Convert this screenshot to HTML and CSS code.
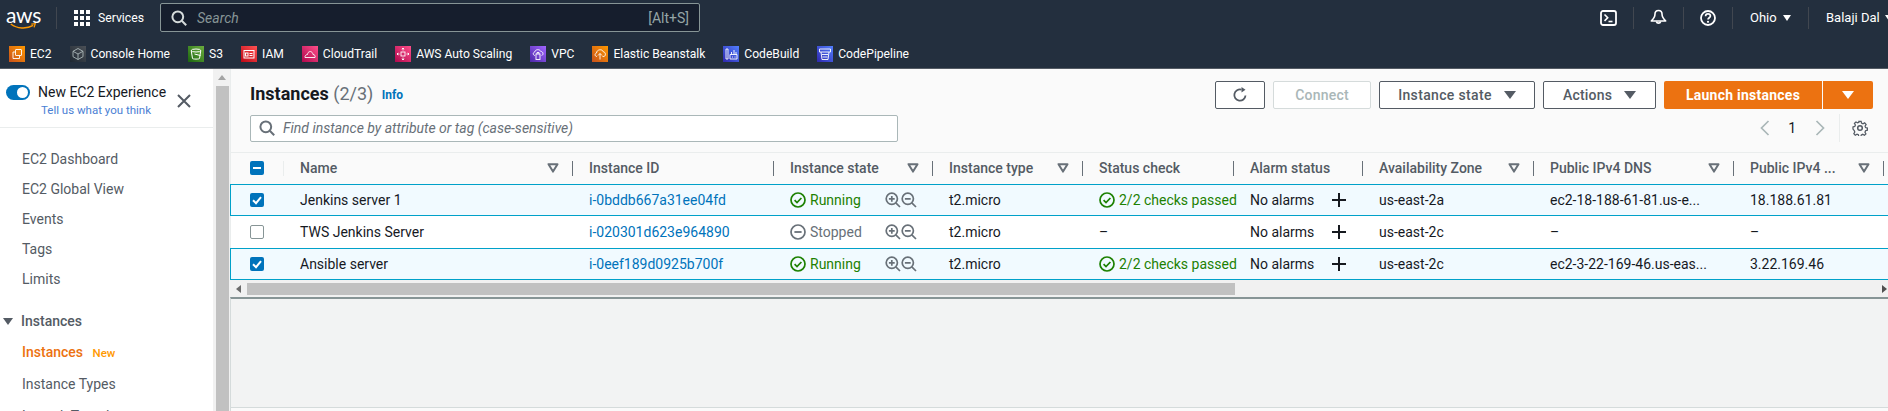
FILE: index.html
```html
<!DOCTYPE html>
<html lang="en">
<head>
<meta charset="utf-8">
<title>Instances | EC2</title>
<link rel="stylesheet" href="styles.css">
</head>
<body>
<svg class="defs" width="0" height="0" aria-hidden="true">
  <symbol id="i-filter" viewBox="0 0 12 10"><path d="M1.5 1.2h9L6 8.6z" fill="none" stroke="#687078" stroke-width="2" stroke-linejoin="round"/></symbol>
  <symbol id="i-ok" viewBox="0 0 16 16"><circle cx="8" cy="8" r="7" fill="none" stroke="#1d8102" stroke-width="1.7"/><path d="M4.6 8.2l2.4 2.4 4.4-4.6" fill="none" stroke="#1d8102" stroke-width="1.7"/></symbol>
  <symbol id="i-stop" viewBox="0 0 16 16"><circle cx="8" cy="8" r="7" fill="none" stroke="#687078" stroke-width="1.7"/><path d="M4.4 8h7.2" fill="none" stroke="#687078" stroke-width="1.8"/></symbol>
  <symbol id="i-zin" viewBox="0 0 16 16"><circle cx="6.8" cy="6.8" r="5.6" fill="none" stroke="#687078" stroke-width="1.7"/><path d="M10.8 10.8l4.2 4.2M3.9 6.8h5.8M6.8 3.9v5.8" fill="none" stroke="#687078" stroke-width="1.7"/></symbol>
  <symbol id="i-zout" viewBox="0 0 16 16"><circle cx="6.8" cy="6.8" r="5.6" fill="none" stroke="#687078" stroke-width="1.7"/><path d="M10.8 10.8l4.2 4.2M3.9 6.8h5.8" fill="none" stroke="#687078" stroke-width="1.7"/></symbol>
  <symbol id="i-plus" viewBox="0 0 14 14"><path d="M7 0v14M0 7h14" fill="none" stroke="#16191f" stroke-width="2"/></symbol>
  <symbol id="i-check" viewBox="0 0 14 14"><rect width="14" height="14" rx="2" fill="#0073bb"/><path d="M3 7.2l3 3 5-6" fill="none" stroke="#fff" stroke-width="2"/></symbol>
  <symbol id="i-search" viewBox="0 0 16 16"><circle cx="6.8" cy="6.8" r="5.4" fill="none" stroke="currentColor" stroke-width="2"/><path d="M10.8 10.8l4.4 4.4" fill="none" stroke="currentColor" stroke-width="2"/></symbol>
</svg>

<header class="topnav">
  <div class="logo">
    <span class="logo-text">aws</span>
    <svg class="logo-smile" width="31" height="8" viewBox="0 0 31 8"><path d="M1 1.2C8 6.6 19 7.2 26.6 2.8" fill="none" stroke="#f90" stroke-width="1.6"/><path d="M24.4 1.2l4.6-.4-1.4 4.2" fill="none" stroke="#f90" stroke-width="1.4"/></svg>
  </div>
  <span class="nav-sep sep-logo"></span>
  <svg class="grid-ic" width="16" height="16" viewBox="0 0 16 16" fill="#fff"><rect width="4" height="4"/><rect x="6" width="4" height="4"/><rect x="12" width="4" height="4"/><rect y="6" width="4" height="4"/><rect x="6" y="6" width="4" height="4"/><rect x="12" y="6" width="4" height="4"/><rect y="12" width="4" height="4"/><rect x="6" y="12" width="4" height="4"/><rect x="12" y="12" width="4" height="4"/></svg>
  <span class="services">Services</span>
  <div class="global-search">
    <svg class="gs-ic" width="16" height="16"><use href="#i-search"/></svg>
    <span class="gs-text">Search</span>
    <span class="gs-key">[Alt+S]</span>
  </div>
  <div class="nav-right">
    <svg class="nav-ic" width="17" height="16" viewBox="0 0 17 16"><rect x="1" y="1" width="15" height="14" rx="2" fill="none" stroke="#fff" stroke-width="1.8"/><path d="M4.5 4.5l3.2 3.2-3.2 3.2" fill="none" stroke="#fff" stroke-width="1.6"/><path d="M8.5 11.5h4" stroke="#fff" stroke-width="1.6"/></svg>
    <span class="nav-sep"></span>
    <svg class="nav-ic" width="17" height="17" viewBox="0 0 17 17"><path d="M8.500 1.500c-2.500 0-3.600 2-3.600 4.200 0 2.600-1.800 4.400-3.600 6.300h14.400c-1.800-1.900-3.600-3.700-3.600-6.300 0-2.200-1.100-4.200-3.600-4.200z" fill="none" stroke="#fff" stroke-width="1.600" stroke-linejoin="round"/><path d="M6.300 12.500a2.300 2.300 0 0 0 4.400 0" fill="none" stroke="#fff" stroke-width="1.600"/></svg>
    <span class="nav-sep"></span>
    <svg class="nav-ic" width="16" height="16" viewBox="0 0 16 16"><circle cx="8" cy="8" r="7" fill="none" stroke="#fff" stroke-width="1.8"/><path d="M5.600 6.200c0-1.500 1.100-2.300 2.400-2.300s2.400.8 2.400 2.100c0 1.700-2.400 1.800-2.400 3.600" fill="none" stroke="#fff" stroke-width="1.700"/><circle cx="8" cy="11.800" r="1.100" fill="#fff"/></svg>
    <span class="nav-sep"></span>
    <span class="nav-label ohio">Ohio</span><span class="caret-w caret-ohio"></span>
    <span class="nav-sep"></span>
    <span class="nav-label user">Balaji Dal</span><span class="caret-w caret-user"></span>
  </div>
</header>

<nav class="favbar">
  <a class="fav"><span class="svc orange"><svg width="16" height="16" viewBox="0 0 16 16" fill="none" stroke="#fff" stroke-width=".9"><rect x="6.500" y="3.500" width="6" height="6" rx=".5"/><path d="M6.500 6H4v6.500h6.500V9.500"/></svg></span>EC2</a>
  <a class="fav"><span class="svc dark"><svg width="16" height="16" viewBox="0 0 16 16" fill="none" stroke="#aab7b8" stroke-width=".9"><path d="M8 2.500l5 2.800v5.400l-5 2.800-5-2.800V5.300zM3 5.300l5 2.700 5-2.700M8 8v5.500"/></svg></span>Console Home</a>
  <a class="fav"><span class="svc green"><svg width="16" height="16" viewBox="0 0 16 16" fill="none" stroke="#fff" stroke-width="1"><ellipse cx="8" cy="4.500" rx="4.800" ry="1.500"/><path d="M3.200 4.500l1.300 8c.3.8 6.700.8 7 0l1.300-8M6.500 8l6 1.500"/></svg></span>S3</a>
  <a class="fav"><span class="svc red"><svg width="16" height="16" viewBox="0 0 16 16" fill="none" stroke="#fff" stroke-width="1"><rect x="3" y="4.500" width="10" height="7.500"/><rect x="4.500" y="7" width="2.500" height="3"/><path d="M8.500 7.500h3M8.500 9.500h3"/></svg></span>IAM</a>
  <a class="fav"><span class="svc pink"><svg width="16" height="16" viewBox="0 0 16 16" fill="none" stroke="#fff" stroke-width=".9"><path d="M3 11.500h10c.6-1.600-.4-3-2-3C10.500 6 8.700 4.800 6.800 6 5.800 6.700 5.600 7.800 5.500 8.500 4 8.500 2.700 10 3 11.500z"/></svg></span>CloudTrail</a>
  <a class="fav"><span class="svc pink"><svg width="16" height="16" viewBox="0 0 16 16" fill="none" stroke="#fff" stroke-width=".9"><rect x="6" y="6" width="4" height="4"/><path d="M8 2v2.500M8 11.500V14M2 8h2.500M11.500 8H14M6.800 3.200L8 2l1.200 1.200M6.800 12.800L8 14l1.200-1.200M3.200 6.800L2 8l1.200 1.200M12.800 6.800L14 8l-1.200 1.200"/></svg></span>AWS Auto Scaling</a>
  <a class="fav"><span class="svc purple"><svg width="16" height="16" viewBox="0 0 16 16" fill="none" stroke="#fff" stroke-width=".9"><path d="M5 9.500C3 9.500 2.500 6.500 4.800 6 5 3.500 9.500 2.500 10.800 5.500c2.400-.2 3 3.500.8 4"/><rect x="6" y="8" width="4" height="5.500"/><path d="M7 8V6.500h2V8"/></svg></span>VPC</a>
  <a class="fav"><span class="svc orange"><svg width="16" height="16" viewBox="0 0 16 16" fill="none" stroke="#fff" stroke-width=".9"><path d="M5 10.500C2.800 10.500 2.300 7.600 4.500 7c0-3.500 5.800-4.500 6.800-1.200 2.300 0 3 4 .6 4.700H10.500M8 13.500V7.500M6 9.500l2-2 2 2"/></svg></span>Elastic Beanstalk</a>
  <a class="fav"><span class="svc blue"><svg width="16" height="16" viewBox="0 0 16 16" fill="none" stroke="#fff" stroke-width=".9"><path d="M3 3v10M5 3v10M3 3h2M3 13h2M7 13h7V8.500H7zM8.500 8.500V6M11 8.500V4M13 8.500V6M9 11h1M11.500 11h1"/></svg></span>CodeBuild</a>
  <a class="fav"><span class="svc blue"><svg width="16" height="16" viewBox="0 0 16 16" fill="none" stroke="#fff" stroke-width=".9"><path d="M2.500 3h11v3h-11zM4 6l1 7.500h6L12 6M5 8.500h6M5.500 11h5"/></svg></span>CodePipeline</a>
</nav>

<div class="shell">
  <aside class="side">
    <div class="side-head">
      <span class="toggle"><span class="knob"></span></span>
      <div class="side-head-text">
        <div class="exp-title">New EC2 Experience</div>
        <div class="exp-link">Tell us what you think</div>
      </div>
      <svg class="side-close" width="14" height="14" viewBox="0 0 14 14"><path d="M1 1l12 12M13 1L1 13" fill="none" stroke="#545b64" stroke-width="2"/></svg>
    </div>
    <ul class="side-list">
      <li>EC2 Dashboard</li>
      <li>EC2 Global View</li>
      <li>Events</li>
      <li>Tags</li>
      <li>Limits</li>
    </ul>
    <div class="side-group"><span class="group-caret"></span>Instances</div>
    <ul class="side-list sub">
      <li class="active">Instances <span class="new">New</span></li>
      <li>Instance Types</li>
      <li>Launch Templates</li>
    </ul>
  </aside>
  <div class="vscroll"><span class="vs-up"></span><span class="vs-thumb"></span></div>

  <main class="main">
    <section class="tools">
      <div class="tools-top">
        <h1 class="title">Instances <span class="count">(2/3)</span> <a class="info">Info</a></h1>
        <div class="actions">
          <button class="btn btn-refresh"><svg width="16" height="16" viewBox="0 0 16 16" fill="none" stroke="#545b64" stroke-width="1.800"><path d="M13.500 8.500A5.600 5.600 0 1 1 9.500 2.700"/><path d="M9.500 0v5.500l4-2.700z" fill="#545b64" stroke="none"/></svg></button>
          <button class="btn btn-connect">Connect</button>
          <button class="btn btn-state">Instance state<span class="caret-d"></span></button>
          <button class="btn btn-actions">Actions<span class="caret-d"></span></button>
          <div class="launch">
            <button class="btn-launch">Launch instances</button>
            <button class="btn-launch-c"><span class="caret-l"></span></button>
          </div>
        </div>
      </div>
      <div class="tools-bottom">
        <div class="find">
          <svg class="find-ic" width="16" height="16"><use href="#i-search"/></svg>
          <span>Find instance by attribute or tag (case-sensitive)</span>
        </div>
        <div class="pager">
          <svg width="10" height="16" viewBox="0 0 10 16"><path d="M8.500 1L1.500 8l7 7" fill="none" stroke="#aab7b8" stroke-width="1.700"/></svg>
          <span class="page-n">1</span>
          <svg width="10" height="16" viewBox="0 0 10 16"><path d="M1.500 1l7 7-7 7" fill="none" stroke="#aab7b8" stroke-width="1.700"/></svg>
          <span class="pager-sep"></span>
          <svg class="gear" width="16" height="16" viewBox="0 0 16 16" fill="none" stroke="#545b64"><circle cx="8" cy="8" r="2.300" stroke-width="1.500"/><path d="M6.800 1h2.400l.4 2 1.500.7 1.800-1 1.500 1.700-1.100 1.700.5 1.500 1.900.5v2.200l-1.900.6-.6 1.500 1 1.700-1.600 1.500-1.700-1-1.500.6-.5 1.800H6.800l-.5-1.900-1.400-.6-1.800 1-1.500-1.600 1-1.700-.6-1.500L.7 9.200V6.900l1.900-.5.6-1.500-1-1.700 1.600-1.500 1.700 1 1.400-.6z" stroke-width="1.300" transform="translate(.3 .3) scale(.96)"/></svg>
        </div>
      </div>
    </section>

    <div class="tr thead">
      <div class="hc hc-check"><span class="cb-mixed"><span></span></span></div>
      <div class="hc hc-first">Name<svg class="flt" width="12" height="10"><use href="#i-filter"/></svg></div>
      <div class="hc">Instance ID</div>
      <div class="hc">Instance state<svg class="flt" width="12" height="10"><use href="#i-filter"/></svg></div>
      <div class="hc">Instance type<svg class="flt" width="12" height="10"><use href="#i-filter"/></svg></div>
      <div class="hc">Status check</div>
      <div class="hc">Alarm status</div>
      <div class="hc">Availability Zone<svg class="flt" width="12" height="10"><use href="#i-filter"/></svg></div>
      <div class="hc">Public IPv4 DNS<svg class="flt" width="12" height="10"><use href="#i-filter"/></svg></div>
      <div class="hc">Public IPv4 ...<svg class="flt" width="12" height="10"><use href="#i-filter"/></svg></div>
      <div class="hc hc-end"></div>
    </div>

    <div class="tr row sel">
      <div class="td td-check"><svg width="14" height="14"><use href="#i-check"/></svg></div>
      <div class="td">Jenkins server 1</div>
      <div class="td"><a class="link">i-0bddb667a31ee04fd</a></div>
      <div class="td run"><svg class="st" width="16" height="16"><use href="#i-ok"/></svg>Running<span class="zooms"><svg width="16" height="16"><use href="#i-zin"/></svg><svg width="16" height="16"><use href="#i-zout"/></svg></span></div>
      <div class="td">t2.micro</div>
      <div class="td run"><svg class="st" width="16" height="16"><use href="#i-ok"/></svg>2/2 checks passed</div>
      <div class="td">No alarms<svg class="plus" width="14" height="14"><use href="#i-plus"/></svg></div>
      <div class="td">us-east-2a</div>
      <div class="td">ec2-18-188-61-81.us-e...</div>
      <div class="td">18.188.61.81</div>
      <div class="td"></div>
    </div>
    <div class="tr row">
      <div class="td td-check"><span class="cb-empty"></span></div>
      <div class="td">TWS Jenkins Server</div>
      <div class="td"><a class="link">i-020301d623e964890</a></div>
      <div class="td stopped"><svg class="st" width="16" height="16"><use href="#i-stop"/></svg>Stopped<span class="zooms"><svg width="16" height="16"><use href="#i-zin"/></svg><svg width="16" height="16"><use href="#i-zout"/></svg></span></div>
      <div class="td">t2.micro</div>
      <div class="td">–</div>
      <div class="td">No alarms<svg class="plus" width="14" height="14"><use href="#i-plus"/></svg></div>
      <div class="td">us-east-2c</div>
      <div class="td">–</div>
      <div class="td">–</div>
      <div class="td"></div>
    </div>
    <div class="tr row sel">
      <div class="td td-check"><svg width="14" height="14"><use href="#i-check"/></svg></div>
      <div class="td">Ansible server</div>
      <div class="td"><a class="link">i-0eef189d0925b700f</a></div>
      <div class="td run"><svg class="st" width="16" height="16"><use href="#i-ok"/></svg>Running<span class="zooms"><svg width="16" height="16"><use href="#i-zin"/></svg><svg width="16" height="16"><use href="#i-zout"/></svg></span></div>
      <div class="td">t2.micro</div>
      <div class="td run"><svg class="st" width="16" height="16"><use href="#i-ok"/></svg>2/2 checks passed</div>
      <div class="td">No alarms<svg class="plus" width="14" height="14"><use href="#i-plus"/></svg></div>
      <div class="td">us-east-2c</div>
      <div class="td">ec2-3-22-169-46.us-eas...</div>
      <div class="td">3.22.169.46</div>
      <div class="td"></div>
    </div>

    <div class="hscroll">
      <span class="hs-btn"><span class="hs-left"></span></span>
      <span class="hs-thumb"></span>
      <span class="hs-fill"></span>
      <span class="hs-btn hs-btn-r"><span class="hs-right"></span></span>
    </div>
    <div class="split"></div>
    <div class="foot"></div>
  </main>
</div>
</body>
</html>
```
FILE: styles.css
```css
* { box-sizing: border-box; }
html, body { margin: 0; height: 411px; overflow: hidden; }
body { font-family: Roboto, "Noto Sans", "Liberation Sans", sans-serif; font-size: 14px; color: #16191f; background: #fff; }
.defs { position: absolute; }
ul { list-style: none; margin: 0; padding: 0; }
button { font-family: inherit; }

/* top nav */
.topnav { height: 40px; background: #232f3e; color: #fff; display: flex; align-items: center; padding: 0 0 5px 8px; overflow: hidden; }
.logo { width: 31px; height: 24px; flex: none; display: flex; flex-direction: column; align-items: center; }
.logo-text { font-family: Lato, Roboto, sans-serif; font-size: 21px; line-height: 15px; letter-spacing: -.3px; margin-top: 1px; }
.logo-smile { margin-top: 1px; }
.nav-sep { width: 1px; height: 22px; background: #414750; flex: none; }
.sep-logo { margin: 0 17px; }
.grid-ic { flex: none; }
.services { font-size: 12.200px; margin-left: 8px; width: 62px; flex: none; }
.global-search { width: 540px; height: 29px; flex: none; border: 1px solid #879596; border-radius: 2px; background: #161e2d; display: flex; align-items: center; padding: 0 10px; }
.gs-ic { color: #d5dbdb; }
.gs-text { font-style: italic; font-size: 14px; color: #879596; margin-left: 10px; }
.gs-key { margin-left: auto; color: #95a5a6; font-size: 14px; }
.nav-right { margin-left: auto; margin-right: -5px; display: flex; align-items: center; flex: none; }
.nav-ic { flex: none; }
.nav-right .nav-sep { margin: 0 16px; }
.nav-label { font-size: 13px; white-space: nowrap; }
.ohio { width: 27px; margin-left: 1px; }
.user { width: 51px; margin-left: 1px; }
.caret-w { width: 0; height: 0; flex: none; border: 4.500px solid transparent; border-top: 6px solid #fff; border-bottom: 0; margin-left: 6px; }
.caret-ohio { margin-left: 5.500px; margin-right: 1.500px; }
.caret-user { margin-left: 8px; }

/* favourites */
.favbar { height: 29px; background: #232f3e; border-bottom: 1px solid #545b64; display: flex; align-items: center; padding-left: 9px; gap: 18px; }
.fav { color: #fff; font-size: 12.100px; display: flex; align-items: center; gap: 5px; white-space: nowrap; }
.svc { width: 16px; height: 16px; display: block; flex: none; }
.svc svg { display: block; }
.orange { background: linear-gradient(45deg, #c8511b, #f90); }
.dark { background: linear-gradient(45deg, #1e2731, #4c5157); }
.green { background: linear-gradient(45deg, #1b660f, #6cae3e); }
.red { background: linear-gradient(45deg, #bd0816, #ff5252); }
.pink { background: linear-gradient(45deg, #b0084d, #ff4f8b); }
.purple { background: linear-gradient(45deg, #4d27a8, #a166ff); }
.blue { background: linear-gradient(45deg, #2e27ad, #527fff); }

/* shell */
.shell { display: flex; height: 342px; }

/* sidebar */
.side { width: 213px; flex: none; background: #fff; overflow: hidden; color: #545b64; }
.side-head { height: 59px; border-bottom: 1px solid #eaeded; display: flex; align-items: flex-start; padding: 14px 0 0 6px; }
.toggle { width: 24px; height: 15px; border-radius: 8px; background: #0073bb; display: flex; align-items: center; justify-content: flex-end; padding-right: 2px; margin-top: 2px; flex: none; }
.knob { width: 11px; height: 11px; border-radius: 50%; background: #fff; }
.side-head-text { margin-left: 8px; width: 133px; flex: none; }
.exp-title { font-size: 14px; line-height: 18px; color: #16191f; white-space: nowrap; }
.exp-link { font-size: 11.500px; line-height: 16px; color: #4a80d4; padding-left: 3px; margin-top: 1px; white-space: nowrap; }
.side-close { margin: 11px 0 0 6px; flex: none; }
.side-list { padding-top: 16px; }
.side-list li { height: 30px; line-height: 30px; padding-left: 22px; white-space: nowrap; }
.side-group { margin-top: 12px; height: 30px; display: flex; align-items: center; font-weight: 500; padding-left: 3px; color: #545b64; }
.group-caret { width: 0; height: 0; border: 5px solid transparent; border-top: 7px solid #545b64; border-bottom: 0; margin-right: 8px; }
.side-list.sub { padding-top: 0; }
.side-list.sub li { height: 32px; line-height: 32px; }
.side-list .active { color: #ec7211; font-weight: 500; }
.new { font-size: 11.500px; margin-left: 6px; color: #ff9900; font-weight: 500; }

/* vertical scrollbar */
.vscroll { width: 17px; flex: none; background: #f1f1f1; padding: 6px 1px 0 2px; display: flex; flex-direction: column; align-items: center; }
.vs-up { width: 0; height: 0; border: 4px solid transparent; border-bottom: 5px solid #a3a3a3; border-top: 0; margin-bottom: 6px; }
.vs-thumb { flex: 1; width: 13px; background: #c1c1c1; }

/* main */
.main { flex: 1; min-width: 0; display: flex; flex-direction: column; background: #fafafa; }
.tools { height: 83px; border-left: 1px solid #eaeded; padding: 11px 15px 0 19px; }
.tools-top { height: 28px; display: flex; justify-content: space-between; align-items: center; }
.title { margin: -2px 0 0; font-size: 18px; font-weight: 700; color: #16191f; }
.count { font-weight: 400; color: #687078; }
.info { font-size: 12px; font-weight: 700; color: #0073bb; margin-left: 4px; vertical-align: 1px; }
.actions { display: flex; gap: 8px; align-items: stretch; height: 28px; margin-top: 2px; }
.btn { height: 28px; border: 1px solid #545b64; border-radius: 2px; background: #fff; color: #545b64; font-size: 14px; font-weight: 500; letter-spacing: .2px; display: flex; align-items: center; justify-content: center; padding: 0; }
.btn-refresh { width: 50px; }
.btn-connect { width: 98px; border-color: #d5dbdb; color: #aab7b8; }
.btn-state { width: 156px; letter-spacing: .35px; }
.btn-actions { width: 113px; }
.caret-d { width: 0; height: 0; border: 6px solid transparent; border-top: 8px solid #545b64; border-bottom: 0; margin-left: 12px; }
.launch { display: flex; gap: 1px; }
.btn-launch, .btn-launch-c { height: 28px; border: 0; background: #ec7211; color: #fff; font-size: 14px; font-weight: 700; padding: 0; }
.btn-launch { width: 158px; border-radius: 2px 0 0 2px; letter-spacing: .25px; }
.btn-launch-c { width: 50px; border-radius: 0 2px 2px 0; display: flex; align-items: center; justify-content: center; }
.caret-l { width: 0; height: 0; border: 6px solid transparent; border-top: 8px solid #fff; border-bottom: 0; }
.tools-bottom { margin-top: 6px; height: 28px; display: flex; justify-content: space-between; align-items: center; }
.find { width: 648px; height: 27px; border: 1px solid #aab7b8; border-radius: 2px; background: #fff; display: flex; align-items: center; padding-left: 8px; font-style: italic; color: #687078; font-size: 14px; }
.find-ic { color: #687078; margin-right: 8px; }
.pager { display: flex; align-items: center; height: 28px; margin-right: 5px; }
.page-n { width: 45.500px; text-align: center; font-size: 14px; color: #16191f; }
.pager-sep { width: 1px; height: 28px; background: #eaeded; margin: 0 12px 0 14px; }
.gear { display: block; }

/* table */
.tr { display: grid; grid-template-columns: 52px 289px 201px 159px 150px 151px 129px 171px 200px 150px 1fr; }
.thead { height: 32px; border-top: 1px solid #eaeded; border-left: 1px solid #eaeded; background: #fafafa; padding-bottom: 1px; }
.hc { display: flex; align-items: center; font-weight: 500; color: #545b64; white-space: nowrap; min-width: 0; }
.hc::before { content: ""; width: 1px; height: 15px; background: #687078; margin-right: 16px; flex: none; }
.hc-check::before { display: none; }
.hc-first::before { background: #eaeded; }
.hc-check { padding-left: 19px; }
.flt { margin-left: auto; margin-right: 13px; flex: none; }
.cb-mixed { width: 14px; height: 14px; border-radius: 2px; background: #0073bb; display: flex; align-items: center; justify-content: center; }
.cb-mixed span { width: 8px; height: 2px; background: #fff; }
.row { height: 32px; background: #fff; border-left: 1px solid #eaeded; }
.row.sel { background: #f1faff; border: 1px solid #00a1c9; border-width: 1px 0 1px 1px; }
.td { display: flex; align-items: center; padding-left: 17px; white-space: nowrap; min-width: 0; }
.td-check { padding-left: 19px; }
.td svg { flex: none; }
.cb-empty { width: 14px; height: 14px; border: 1px solid #879596; border-radius: 2px; background: #fff; }
.link { color: #0073bb; }
.run { color: #1d8102; }
.stopped { color: #687078; }
.st { margin-right: 4px; }
.zooms { display: flex; margin-left: auto; margin-right: 15px; }
.plus { margin-left: auto; margin-right: 16px; }

/* horizontal scrollbar */
.hscroll { height: 17px; background: #f1f1f1; display: flex; align-items: flex-end; padding-bottom: 2px; }
.hs-btn { width: 17px; height: 12px; display: flex; align-items: center; justify-content: center; flex: none; }
.hs-left { width: 0; height: 0; border: 4px solid transparent; border-right: 5px solid #6b6b6b; border-left: 0; }
.hs-right { width: 0; height: 0; border: 4px solid transparent; border-left: 5px solid #505050; border-right: 0; }
.hs-thumb { width: 988px; height: 12px; background: #c1c1c1; flex: none; }
.hs-fill { flex: 1; }
.hs-btn-r { width: 8px; }
.split { height: 111px; background: #f2f3f3; border-top: 2px solid #879596; border-left: 1px solid #d5dbdb; border-bottom: 1px solid #d5dbdb; }
.foot { flex: 1; background: #fafafa; border-left: 1px solid #d5dbdb; }
```
